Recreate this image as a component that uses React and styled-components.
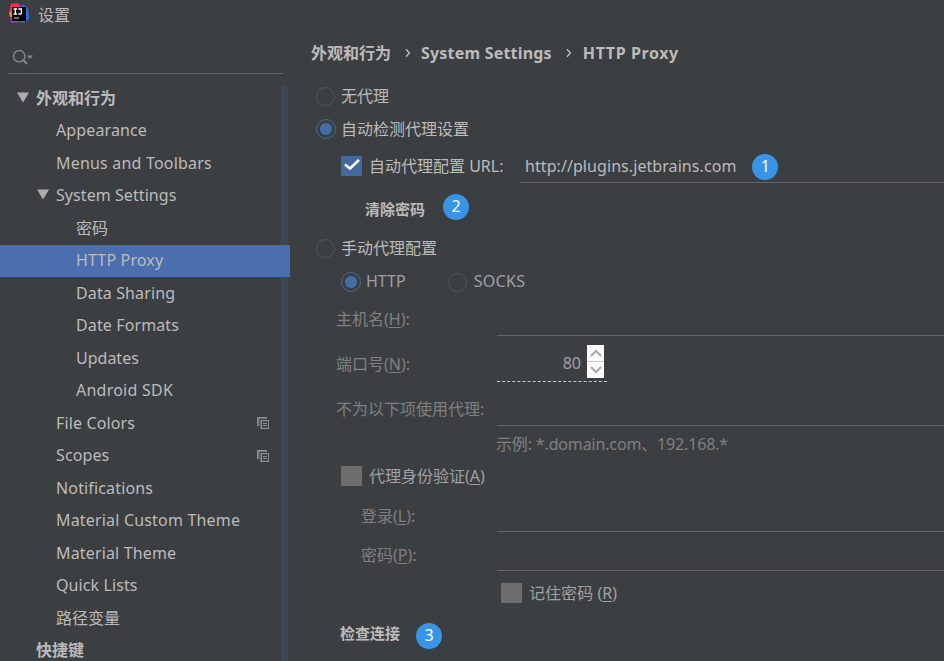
import React from "react";
import styled, { createGlobalStyle, css } from "styled-components";

const GlobalStyle = createGlobalStyle`
  * { box-sizing: border-box; }
  body {
    margin: 0;
    background: #3c3f41;
    overflow: hidden;
  }
`;

const Window = styled.div`
  width: 944px;
  height: 661px;
  overflow: hidden;
  display: flex;
  flex-direction: column;
  background: #3c3f41;
  color: #bbbbbb;
  font-family: "Noto Sans", "Noto Sans CJK SC", sans-serif;
  font-size: 16px;
  line-height: 22px;
  white-space: nowrap;
`;

const TitleBar = styled.header`
  height: 30px;
  flex: none;
  display: flex;
  align-items: center;
  gap: 8px;
  padding-left: 8px;
  & > svg { margin-top: -3px; }
`;

const Body = styled.div`
  display: flex;
  flex: 1;
  min-height: 0;
`;

const Sidebar = styled.nav`
  position: relative;
  width: 290px;
  flex: none;
  overflow: hidden;
`;

const SearchBox = styled.div`
  width: 275px;
  height: 44px;
  margin-left: 8px;
  padding: 19px 0 0 4px;
  border-bottom: 1px solid #646464;
`;

const Tree = styled.div`
  padding-top: 8px;
`;

const TreeRow = styled.div`
  height: 32.5px;
  display: flex;
  align-items: center;
  padding-left: ${(p) => 36 + p.$level * 20}px;
  padding-right: 21px;
  background: ${(p) => (p.$selected ? "#4b6eaf" : "transparent")};
  font-weight: ${(p) => (p.$level === 0 ? 700 : 400)};
`;

const TreeLabel = styled.span`
  margin-bottom: 1px;
  letter-spacing: ${(p) => p.$track || 0}px;
`;

const Arrow = styled.svg`
  flex: none;
  width: 12px;
  height: 11px;
  margin: -2px 7px 0 -19px;
`;

const ItemIcon = styled.svg`
  margin-left: auto;
`;

const ScrollThumb = styled.div`
  position: absolute;
  top: 55px;
  bottom: 0;
  left: 281px;
  width: 7px;
  border-radius: 4px 4px 0 0;
  background: rgba(70, 106, 160, 0.22);
`;

const Content = styled.main`
  flex: 1;
  min-width: 0;
`;

const Breadcrumb = styled.div`
  height: 46px;
  padding-left: 21px;
  display: flex;
  align-items: center;
  font-weight: 700;
`;

const Chevron = styled.svg`
  width: 6px;
  height: 10px;
  margin: 0 ${(p) => p.$right}px 0 ${(p) => p.$left}px;
`;

const Row = styled.div`
  height: ${(p) => p.$h}px;
  padding-left: ${(p) => p.$indent}px;
  display: flex;
  align-items: center;
`;

const Text = styled.span`
  letter-spacing: ${(p) => p.$track || 0}px;
  margin-bottom: ${(p) => p.$lift || 0}px;
  ${(p) => p.$dim && css`color: #a0a1a2;`}
  ${(p) => p.$disabled && css`color: #808080;`}
`;

const Mnemonic = styled.u`
  text-underline-offset: 2px;
  text-decoration-thickness: 1px;
`;

const Radio = styled.span`
  flex: none;
  width: ${(p) => (p.$on ? 20 : 19)}px;
  height: ${(p) => (p.$on ? 20 : 19)}px;
  margin-right: ${(p) => p.$gap}px;
  border-radius: 50%;
  border: 1.5px solid ${(p) => (p.$on ? "#43699d" : "#525455")};
  display: grid;
  place-items: center;
  &::after {
    content: "";
    width: 12px;
    height: 12px;
    border-radius: 50%;
    background: ${(p) => (p.$on ? "#456ea6" : "transparent")};
  }
`;

const Checkbox = styled.span`
  flex: none;
  width: 21px;
  height: 20px;
  margin-right: 7px;
  border-radius: 1px;
  background: ${(p) => (p.$on ? "#43699d" : "#6e6e6e")};
  & > svg { display: block; }
`;

const FieldLabel = styled.label`
  width: ${(p) => p.$w}px;
  flex: none;
  margin-bottom: ${(p) => p.$lift || 0}px;
  color: ${(p) => (p.$enabled ? "#bbbbbb" : "#808080")};
`;

const Field = styled.div`
  flex: 1;
  height: ${(p) => p.$h}px;
  padding-left: 5px;
  display: flex;
  align-items: center;
  border-bottom: 1px solid #646464;
`;

const PortField = styled.div`
  width: 110px;
  height: 35px;
  padding: 0 3px 3px 0;
  display: flex;
  align-items: center;
  justify-content: flex-end;
  gap: 6px;
  color: #a0a1a2;
  border-bottom: 1px dashed #c8c8c8;
`;

const Spinner = styled.div`
  width: 17px;
  height: 33px;
  margin-top: -2px;
  display: grid;
  grid-template-rows: 1fr 1fr;
  gap: 1px;
  background: #c8c8c8;
`;

const SpinButton = styled.span`
  background: #fafafa;
  display: grid;
  place-items: center;
`;

const LinkButton = styled.span`
  margin-top: ${(p) => p.$drop || 0}px;
  font-size: 15px;
  font-weight: 700;
`;

const Badge = styled.span`
  flex: none;
  width: 26px;
  height: 26px;
  margin-left: ${(p) => p.$left}px;
  margin-top: ${(p) => p.$top || 0}px;
  border-radius: 50%;
  background: #3794e6;
  color: #ffffff;
  text-align: center;
  line-height: 24px;
`;

const items = [
  { text: "外观和行为", level: 0, open: true },
  { text: "Appearance", level: 1, track: 0.12 },
  { text: "Menus and Toolbars", level: 1, track: 0.2 },
  { text: "System Settings", level: 1, open: true, track: 0.07 },
  { text: "密码", level: 2 },
  { text: "HTTP Proxy", level: 2, selected: true, track: 0.15 },
  { text: "Data Sharing", level: 2, track: 0.12 },
  { text: "Date Formats", level: 2, track: 0.12 },
  { text: "Updates", level: 2 },
  { text: "Android SDK", level: 2, track: 0.24 },
  { text: "File Colors", level: 1, project: true, track: 0.14 },
  { text: "Scopes", level: 1, project: true, track: 0.1 },
  { text: "Notifications", level: 1, track: 0.15 },
  { text: "Material Custom Theme", level: 1, track: 0.18 },
  { text: "Material Theme", level: 1, track: 0.15 },
  { text: "Quick Lists", level: 1, track: 0.1 },
  { text: "路径变量", level: 1 },
  { text: "快捷键", level: 0 },
];

const Logo = () => (
  <svg width="22" height="21" viewBox="0 0 22 21">
    <path d="M3 1 10 0 14 5 6 14 1 10z" fill="#f92b62" />
    <path d="M1 10 5 8 7 15 2 14z" fill="#f58a25" />
    <path d="M2 15 8 12 14 19 3 20z" fill="#a334c8" />
    <path d="M14 1 20 5 21 16 15 20 9 18 13 8z" fill="#3768e8" />
    <rect x="4" y="4" width="14" height="14" fill="#080808" />
    <path d="M5.6 6h3.4M7.3 6v5M5.6 11h3.4M10.2 6h3.2v4q0 1-1 1h-2" fill="none" stroke="#fff" strokeWidth="1.3" />
    <path d="M6 15h5" stroke="#999" strokeWidth="1.4" />
  </svg>
);

const SearchIcon = () => (
  <svg width="22" height="17" viewBox="0 0 22 17">
    <circle cx="7.2" cy="7.2" r="5.7" fill="none" stroke="#7f8b91" strokeWidth="1.4" />
    <path d="M11.2 11.2 15 15" stroke="#7f8b91" strokeWidth="1.8" />
    <path d="M15 6.5h6l-3 3.5z" fill="#7f8b91" />
  </svg>
);

const ProjectIcon = () => (
  <ItemIcon width="12" height="12" viewBox="0 0 12 12">
    <path d="M0 0h10v2H2.5v7H0z" fill="#6f7a80" />
    <path d="M0 0h10v1H1v8H0z" fill="#87939a" />
    <path d="M3.5 3H12v9H3.5z" fill="#87939a" />
    <path d="M5 4.2h6v6.6H5z" fill="#3c3f41" />
    <path d="M6 6.5h4M6 8.5h4" stroke="#87939a" strokeWidth="1" />
  </ItemIcon>
);

const Separator = ({ left, right }) => (
  <Chevron viewBox="0 0 6 10" $left={left} $right={right}>
    <path d="M1 1.2 4.4 5 1 8.8" fill="none" stroke="#bbb" strokeWidth="1.4" />
  </Chevron>
);

export default function App() {
  return (
    <Window>
      <GlobalStyle />
      <TitleBar>
        <Logo />
        <Text>设置</Text>
      </TitleBar>
      <Body>
        <Sidebar>
          <SearchBox>
            <SearchIcon />
          </SearchBox>
          <Tree>
            {items.map((it) => (
              <TreeRow key={it.text} $level={it.level} $selected={it.selected}>
                {it.open && (
                  <Arrow viewBox="0 0 12 11">
                    <path d="M0 0.5h12L6 10.5z" fill="#adadad" />
                  </Arrow>
                )}
                <TreeLabel $track={it.track}>{it.text}</TreeLabel>
                {it.project && <ProjectIcon />}
              </TreeRow>
            ))}
          </Tree>
          <ScrollThumb />
        </Sidebar>
        <Content>
          <Breadcrumb>
            <Text>外观和行为</Text>
            <Separator left={14} right={10} />
            <Text $track={0.2}>System Settings</Text>
            <Separator left={14} right={11} />
            <Text $track={0.6}>HTTP Proxy</Text>
          </Breadcrumb>
          <Row $h={40} $indent={26}>
            <Radio $gap={6} />
            <Text $lift={1}>无代理</Text>
          </Row>
          <Row $h={26} $indent={26}>
            <Radio $on $gap={5} />
            <Text>自动检测代理设置</Text>
          </Row>
          <Row $h={48} $indent={51}>
            <Checkbox $on>
              <svg width="21" height="20" viewBox="0 0 21 20">
                <path d="M4 8.5 9 12.5 18 4" fill="none" stroke="#fff" strokeWidth="2.6" />
              </svg>
            </Checkbox>
            <FieldLabel $w={151} $enabled>自动代理配置 URL:</FieldLabel>
            <Field $h={34}>
              <Text $track={0.07}>http://plugins.jetbrains.com</Text>
              <Badge $left={16} $top={2}>1</Badge>
            </Field>
          </Row>
          <Row $h={36} $indent={75}>
            <LinkButton $drop={1}>清除密码</LinkButton>
            <Badge $left={18} $top={-2}>2</Badge>
          </Row>
          <Row $h={45} $indent={26}>
            <Radio $gap={6} />
            <Text $lift={1}>手动代理配置</Text>
          </Row>
          <Row $h={22} $indent={51}>
            <Radio $on $gap={5} />
            <Text $dim $lift={2}>HTTP</Text>
            <Row $h={22} $indent={42}>
              <Radio $gap={7} />
              <Text $dim $lift={2} $track={0.3}>SOCKS</Text>
            </Row>
          </Row>
          <Row $h={54} $indent={46}>
            <FieldLabel $w={161} $lift={2}>主机名(<Mnemonic>H</Mnemonic>):</FieldLabel>
            <Field $h={32} />
          </Row>
          <Row $h={35} $indent={46}>
            <FieldLabel $w={161} $lift={2}>端口号(<Mnemonic>N</Mnemonic>):</FieldLabel>
            <PortField>
              <Text>80</Text>
              <Spinner>
                <SpinButton>
                  <svg width="12" height="8" viewBox="0 0 12 8"><path d="M1 7 6 2 11 7" fill="none" stroke="#aaa" strokeWidth="2" /></svg>
                </SpinButton>
                <SpinButton>
                  <svg width="12" height="8" viewBox="0 0 12 8"><path d="M1 1 6 6 11 1" fill="none" stroke="#aaa" strokeWidth="2" /></svg>
                </SpinButton>
              </Spinner>
            </PortField>
          </Row>
          <Row $h={54} $indent={46}>
            <FieldLabel $w={161} $lift={1}>不为以下项使用代理:</FieldLabel>
            <Field $h={34} />
          </Row>
          <Row $h={16} $indent={206}>
            <Text $disabled $track={-0.15}>示例: *.domain.com、192.168.*</Text>
          </Row>
          <Row $h={48} $indent={51}>
            <Checkbox />
            <Text $dim>代理身份验证(<Mnemonic>A</Mnemonic>)</Text>
          </Row>
          <Row $h={32} $indent={71}>
            <FieldLabel $w={136} $lift={1}>登录(<Mnemonic>L</Mnemonic>):</FieldLabel>
            <Field $h={32} />
          </Row>
          <Row $h={47} $indent={71}>
            <FieldLabel $w={136} $lift={2}>密码(<Mnemonic>P</Mnemonic>):</FieldLabel>
            <Field $h={31} />
          </Row>
          <Row $h={27} $indent={211}>
            <Checkbox />
            <Text $dim $track={0.05}>记住密码 (<Mnemonic>R</Mnemonic>)</Text>
          </Row>
          <Row $h={55} $indent={50}>
            <LinkButton $drop={-1}>检查连接</LinkButton>
            <Badge $left={16} $top={5}>3</Badge>
          </Row>
        </Content>
      </Body>
    </Window>
  );
}
